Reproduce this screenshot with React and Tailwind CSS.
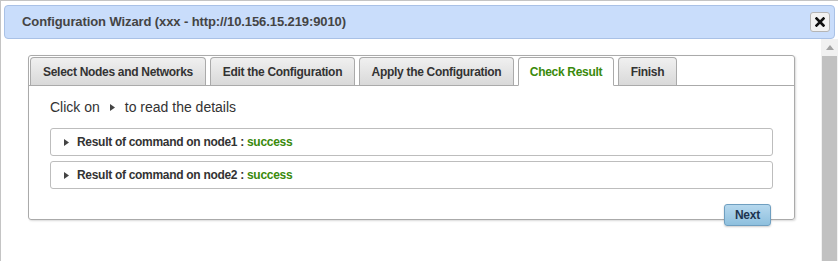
import React from "react";

const tabs = [
  { label: "Select Nodes and Networks", w: "w-[176px]" },
  { label: "Edit the Configuration", w: "w-[145px]" },
  { label: "Apply the Configuration", w: "w-[155px]" },
  { label: "Check Result", w: "w-[96px]", active: true },
  { label: "Finish", w: "w-[59px]" },
];

const Caret = () => (
  <svg width="5" height="7" viewBox="0 0 5 7" className="shrink-0">
    <path d="M0 0 L5 3.5 L0 7 Z" fill="#444" />
  </svg>
);

const ResultRow = ({ node }) => (
  <div className="flex items-center h-[28px] border border-[#bdbdbd] rounded-[3px] pl-[13px] gap-[8px] text-[12px] font-bold tracking-[-0.3px] text-[#333]">
    <Caret />
    <span>
      Result of command on {node} : <span className="text-[#3a8a0c]">success</span>
    </span>
  </div>
);

export default function App() {
  return (
    <div
      className="w-[838px] h-[261px] bg-white border-t border-l border-[#c4c4c4] overflow-hidden flex flex-col"
      style={{ fontFamily: '"Liberation Sans", Arial, sans-serif' }}
    >
      <div className="mt-[4px] ml-[3px] mr-[3px] h-[34px] shrink-0 flex items-center justify-between bg-[#c9ddfb] border border-[#a9c1e6] rounded-[4px] pl-[17px] pr-[4px]">
        <span className="text-[13px] font-bold tracking-[-0.1px] text-[#444]">
          Configuration Wizard (xxx - http://10.156.15.219:9010)
        </span>
        <button className="w-[20px] h-[20px] flex items-center justify-center bg-[#f2f2f2] border border-[#b5b5b5] rounded-[3px]">
          <svg width="10" height="10" viewBox="0 0 10 10">
            <path d="M1.5 1.5 L8.5 8.5 M8.5 1.5 L1.5 8.5" stroke="#111" strokeWidth="2.6" strokeLinecap="square" />
          </svg>
        </button>
      </div>

      <div className="flex flex-1 min-h-0">
        <div className="flex-1 pt-[16px] pl-[27px] pr-[26px]">
          <div className="relative h-[165px] border border-[#aaa] rounded-[3px] shadow-[1px_1px_2px_rgba(0,0,0,0.15)]">
            <div className="flex items-end gap-[4px] pl-[1px] pt-[1px] h-[30px] border-b border-[#aaa]">
              {tabs.map((t) =>
                t.active ? (
                  <div
                    key={t.label}
                    className={`${t.w} h-[29px] -mb-px flex items-center justify-center bg-white border border-[#aaa] border-b-white rounded-t-[4px] text-[12px] font-bold tracking-[-0.3px] text-[#3a8a0c]`}
                  >
                    {t.label}
                  </div>
                ) : (
                  <div
                    key={t.label}
                    className={`${t.w} h-[28px] flex items-center justify-center bg-gradient-to-b from-[#f0f0f0] to-[#d9d9d9] border border-[#aaa] border-b-0 rounded-t-[4px] text-[12px] font-bold tracking-[-0.3px] text-[#333]`}
                  >
                    {t.label}
                  </div>
                )
              )}
            </div>
            <div className="px-[21px] pt-[12px]">
              <div className="flex items-center text-[14px] text-[#333] h-[18px]">
                <span>Click on</span>
                <span className="mx-[10px] flex"><Caret /></span>
                <span>to read the details</span>
              </div>
              <div className="mt-[12px] flex flex-col gap-[5px]">
                <ResultRow node="node1" />
                <ResultRow node="node2" />
              </div>
            </div>
            <button className="absolute right-[23px] top-[148px] w-[47px] h-[22px] rounded-[3px] border border-[#6f9fc0] bg-gradient-to-b from-[#b6d8ee] to-[#8ec0de] shadow-[0_1px_2px_rgba(0,0,0,0.2)] text-[12px] font-bold tracking-[-0.2px] text-[#1e3550]">
              Next
            </button>
          </div>
        </div>
        <div className="w-[17px] bg-[#f1f1f1] flex flex-col items-center">
          <div className="h-[17px] flex items-center justify-center">
            <svg width="8" height="5" viewBox="0 0 8 5">
              <path d="M0 5 L4 0 L8 5 Z" fill="#a3a3a3" />
            </svg>
          </div>
          <div className="w-[15px] flex-1 bg-[#c1c1c1]" />
        </div>
      </div>
    </div>
  );
}
